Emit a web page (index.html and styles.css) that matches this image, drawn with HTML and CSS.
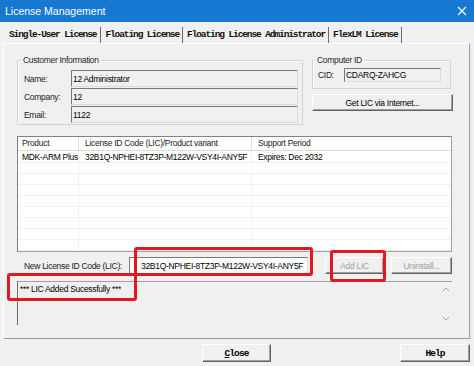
FILE: index.html
```html
<!DOCTYPE html>
<html lang="en">
<head>
<meta charset="UTF-8">
<title>License Management</title>
<link rel="stylesheet" href="styles.css">
</head>
<body>
<div class="window">
  <div class="titlebar">
    <span>License Management</span>
    <svg class="close-x" width="10" height="10" viewBox="0 0 10 10"><path d="M1 1L9 9M9 1L1 9" stroke="#fff" stroke-width="1.1"/></svg>
  </div>
  <div class="tabs">
    <span class="tab first">Single-User License</span>
    <span class="tab">Floating License</span>
    <span class="tab">Floating License Administrator</span>
    <span class="tab">FlexLM License</span>
  </div>
  <div class="panel">
    <div class="top-row">
      <fieldset class="group customer">
        <legend>Customer Information</legend>
        <div class="field"><label>Name:</label><div class="box">12 Administrator</div></div>
        <div class="field"><label>Company:</label><div class="box">12</div></div>
        <div class="field"><label>Email:</label><div class="box">1122</div></div>
      </fieldset>
      <div class="side">
        <fieldset class="group cid">
          <legend>Computer ID</legend>
          <div class="field small"><label>CID:</label><div class="box">CDARQ-ZAHCG</div></div>
        </fieldset>
        <button class="btn internet">Get LIC via Internet...</button>
      </div>
    </div>
    <div class="list">
      <div class="row head"><div class="c1">Product</div><div class="c2">License ID Code (LIC)/Product variant</div><div class="c3">Support Period</div></div>
      <div class="row"><div class="c1">MDK-ARM Plus</div><div class="c2">32B1Q-NPHEI-8TZ3P-M122W-VSY4I-ANY5F</div><div class="c3">Expires: Dec 2032</div></div>
      <div class="row"><div class="c1"></div><div class="c2"></div><div class="c3"></div></div>
      <div class="row"><div class="c1"></div><div class="c2"></div><div class="c3"></div></div>
      <div class="row"><div class="c1"></div><div class="c2"></div><div class="c3"></div></div>
      <div class="row"><div class="c1"></div><div class="c2"></div><div class="c3"></div></div>
      <div class="row"><div class="c1"></div><div class="c2"></div><div class="c3"></div></div>
      <div class="row"><div class="c1"></div><div class="c2"></div><div class="c3"></div></div>
      <div class="row"><div class="c1"></div><div class="c2"></div><div class="c3"></div></div>
      <div class="row"><div class="c1"></div><div class="c2"></div><div class="c3"></div></div>
      <div class="row"><div class="c1"></div><div class="c2"></div><div class="c3"></div></div>
    </div>
    <div class="lic-row">
      <label>New License ID Code (LIC):</label>
      <div class="box white">32B1Q-NPHEI-8TZ3P-M122W-VSY4I-ANY5F</div>
      <button class="btn add" disabled>Add LIC</button>
      <button class="btn uninstall" disabled>Uninstall...</button>
    </div>
    <div class="msg">
      <div class="msg-text">*** LIC Added Sucessfully ***</div>
      <div class="scroll">
        <svg width="8" height="5" viewBox="0 0 8 5"><path d="M1 4L4 1L7 4" fill="none" stroke="#a8a8a8"/></svg>
        <svg width="8" height="5" viewBox="0 0 8 5"><path d="M1 1L4 4L7 1" fill="none" stroke="#a8a8a8"/></svg>
      </div>
    </div>
  </div>
  <div class="footer">
    <button class="btn mono close"><u>C</u>lose</button>
    <button class="btn mono help">Help</button>
  </div>
  <div class="mark m-lic"></div>
  <div class="mark m-add"></div>
  <div class="mark m-msg"></div>
</div>
</body>
</html>
```

FILE: styles.css
```css
*{margin:0;padding:0;box-sizing:border-box;}
body{width:474px;height:366px;overflow:hidden;background:#f0f0f0;color:#000;font:8.5px/12px "Liberation Sans",Arial,sans-serif;letter-spacing:-0.3px;}
.window{position:relative;height:366px;}

.titlebar{height:22px;background:#1778d2;color:#fff;display:flex;align-items:center;justify-content:space-between;padding:0 7px 0 5px;font:10.5px "Liberation Sans",Arial,sans-serif;letter-spacing:0;}

.tabs{display:flex;height:21px;padding:4px 0 0 4px;font:bold 9.5px/17px "Liberation Mono",monospace;letter-spacing:-1.1px;color:#111;}
.tab{padding:0 3px 0 4px;border-right:1px solid #6a6a6a;height:16px;margin-top:1px;line-height:15px;}
.tab.first{padding:0 4px 0 5px;}

.panel{margin:0 4px 0 3px;height:296px;border:1px solid;border-color:#fff #a0a0a0 #9a9a9a #fff;box-shadow:1px 0 0 #e3e3e3;padding:10px 16px 0 13px;}

.top-row{display:flex;gap:9px;}
.group{border:1px solid #d2d2d2;box-shadow:inset 1px 1px 0 #fff;}
.group legend{padding:0 2px;margin-left:-3px;line-height:12px;color:#222;}
.customer{width:288px;padding:4px 4px 1px 6px;}
.side{width:141px;}
.cid{width:139px;padding:2px 9px 6px 5px;}

.field{display:flex;align-items:center;height:17px;margin-bottom:1px;}
.field:last-child{margin-bottom:0;}
.field label{width:47px;color:#222;}
.field.small{height:14px;}
.field.small label{width:26px;}
.box{flex:1;height:100%;border:1px solid;border-color:#7a7a7a #dcdcdc #dcdcdc #7a7a7a;background:#f0f0f0;padding-left:1px;display:flex;align-items:center;white-space:nowrap;overflow:hidden;}

.btn{display:flex;align-items:center;justify-content:center;height:17px;background:#f0f0f0;border:1px solid;border-color:#fff #646464 #646464 #fff;box-shadow:inset -1px -1px 0 #a0a0a0;font:inherit;letter-spacing:inherit;color:#000;}
.btn:disabled{color:#a0a0a0;}
.internet{width:141px;margin-top:5px;}

.list{margin-top:11px;width:435px;height:116px;overflow:hidden;background:#fff;border:1px solid;border-color:#828282 #a0a0a0 #a0a0a0 #828282;}
.row{display:flex;height:11px;line-height:11px;border-bottom:1px solid #f0f0f0;white-space:nowrap;}
.row div{padding-left:4px;border-right:1px solid #f0f0f0;overflow:hidden;}
.c1{width:61px;}
.c2{width:173px;padding-left:6px !important;}
.c3{flex:1;border-right:none !important;padding-left:6px !important;}
.row.head{height:14px;line-height:13px;border-bottom:1px solid #dcdcdc;}
.row.head div{border-right-color:#dcdcdc;color:#222;}
.row.head + .row{height:12px;line-height:12px;}

.lic-row{display:flex;align-items:center;height:17px;margin-top:5px;}
.lic-row label{width:112px;padding-left:7px;color:#222;}
.lic-row .box.white{flex:none;width:179px;background:#fff;padding-left:11px;}
.add{width:59px;margin-left:17px;}
.uninstall{width:61px;margin-left:7px;}

.msg{display:flex;margin-top:7px;width:435px;height:44px;border-left:1px solid #6e6e6e;border-top:1px solid #a0a0a0;}
.msg-text{flex:1;padding:1px 0 0 2px;}
.scroll{width:13px;display:flex;flex-direction:column;justify-content:space-between;align-items:center;padding:5px 0 4px;}

.footer{display:flex;padding:5px 4px 0 202px;}
.mono{font:bold 9.5px "Liberation Mono",monospace;letter-spacing:-0.9px;height:18px;}
.close{width:69px;}
.help{width:70px;margin-left:auto;}

.mark{position:absolute;border:3px solid #e3171e;border-radius:3px;}
.m-lic{left:134px;top:247px;width:179px;height:29px;}
.m-add{left:330px;top:250px;width:56px;height:32px;}
.m-msg{left:7px;top:273px;width:130px;height:28px;}
```
